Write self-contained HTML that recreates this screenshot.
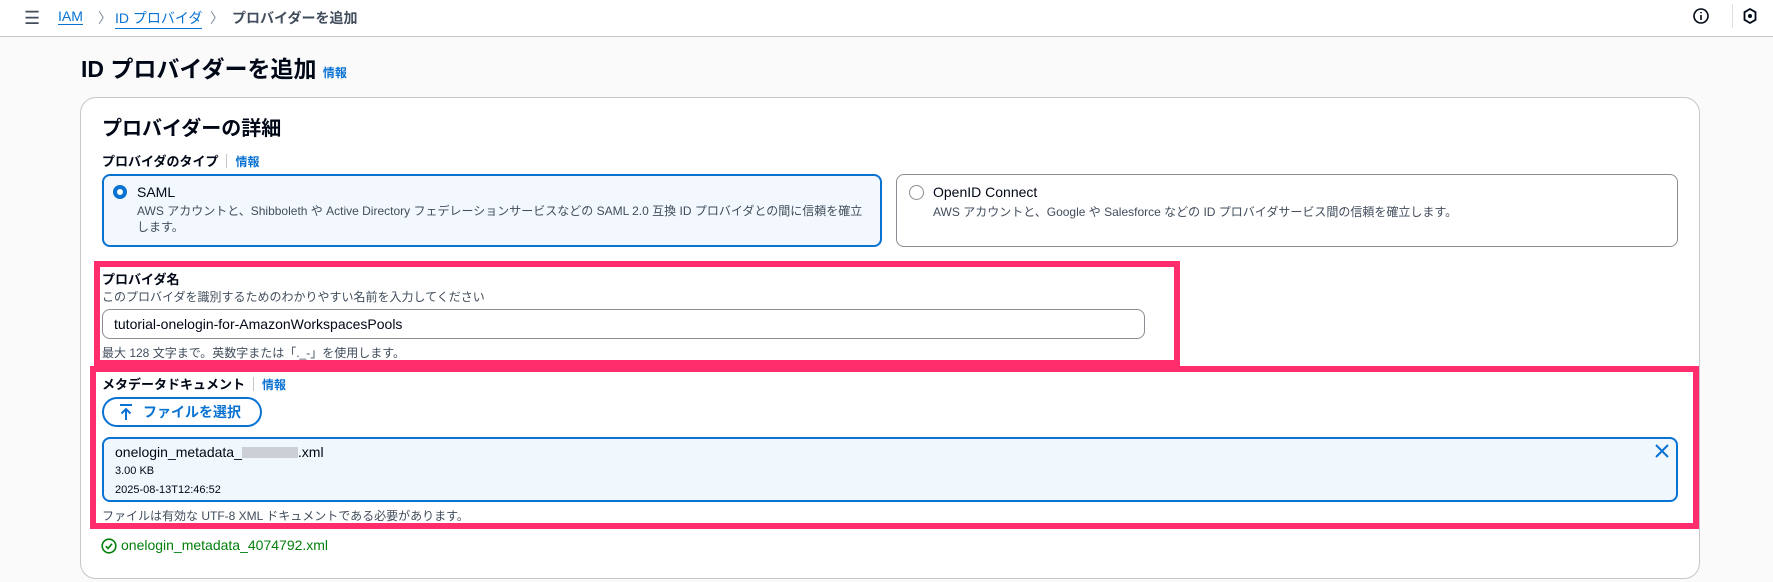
<!DOCTYPE html>
<html><head><meta charset="utf-8"><style>
*{box-sizing:border-box;margin:0;padding:0}
body{width:1773px;height:582px;background:#fafafa;font-family:"Liberation Sans","Noto Sans CJK JP",sans-serif;color:#000716;position:relative;overflow:hidden}
.abs{position:absolute;white-space:nowrap}
.hdr{position:absolute;left:0;top:0;width:1773px;height:37px;background:#fff;border-bottom:1px solid #c6c6cd}
a{color:#0972d3;text-decoration:none}
.bc{font-size:14px;top:8px}
.card{position:absolute;left:80px;top:97px;width:1620px;height:482px;background:#fff;border:1px solid #c6c6cd;border-radius:16px}
.tile{position:absolute;top:174px;height:73px;border-radius:8px}
.pink{position:absolute;border:6px solid #ff2d6b}
.small{font-size:12px;color:#414d5c}
.lbl{font-size:14px;font-weight:bold}
.info{font-size:12px;color:#0972d3;font-weight:bold}
.sep{display:inline-block;width:1px;height:14px;background:#c6c6cd;margin:0 8px;vertical-align:-2px}
</style></head><body>
<div class="hdr"></div>
<div class="abs" style="left:24px;top:8px;font-size:18px;color:#414d5c">☰</div>
<a class="abs bc" style="left:58px;border-bottom:1px solid #0972d3">IAM</a>
<div class="abs bc" style="left:98px;color:#7d8998">〉</div>
<a class="abs bc" style="left:115px;border-bottom:1px solid #0972d3">ID プロバイダ</a>
<div class="abs bc" style="left:210px;color:#7d8998">〉</div>
<div class="abs bc" style="left:232px;color:#414d5c;font-weight:bold">プロバイダーを追加</div>
<svg class="abs" style="left:1692px;top:7px" width="18" height="18" viewBox="0 0 18 18"><circle cx="9" cy="9" r="7" fill="none" stroke="#000716" stroke-width="1.6"/><path d="M9 8v5M9 5v1.2" stroke="#000716" stroke-width="1.6"/></svg>
<div class="abs" style="left:1732px;top:4px;width:1px;height:24px;background:#e0e0e0"></div>
<svg class="abs" style="left:1742px;top:7px" width="16" height="18" viewBox="0 0 16 18"><path d="M8 2l5.5 3.2v7.6L8 16 2.5 12.8V5.2z" fill="none" stroke="#000716" stroke-width="1.8"/><circle cx="8" cy="9" r="2" fill="#000716"/></svg>
<div class="abs" style="left:81px;top:50px;font-size:23px;font-weight:bold">ID プロバイダーを追加 <span style="font-size:12px;color:#0972d3">情報</span></div>
<div class="card"></div>
<div class="abs" style="left:102px;top:112px;font-size:20px;font-weight:bold">プロバイダーの詳細</div>
<div class="abs lbl" style="left:102px;top:151px;font-size:13px">プロバイダのタイプ<span class="sep"></span><span class="info">情報</span></div>
<div class="tile" style="left:102px;width:780px;background:#f2f8fd;border:2px solid #0972d3"></div>
<div class="abs" style="left:113px;top:185px;width:14px;height:14px;border-radius:50%;border:4px solid #0972d3;background:#fff"></div>
<div class="abs" style="left:137px;top:184px;font-size:14px">SAML</div>
<div class="abs small" style="left:137px;top:203px;line-height:16px">AWS アカウントと、Shibboleth や Active Directory フェデレーションサービスなどの SAML 2.0 互換 ID プロバイダとの間に信頼を確立<br>します。</div>
<div class="tile" style="left:896px;width:782px;background:#fff;border:1px solid #8c8c94"></div>
<div class="abs" style="left:909px;top:185px;width:15px;height:15px;border-radius:50%;border:1px solid #8c8c94"></div>
<div class="abs" style="left:933px;top:184px;font-size:14px">OpenID Connect</div>
<div class="abs small" style="left:933px;top:203px">AWS アカウントと、Google や Salesforce などの ID プロバイダサービス間の信頼を確立します。</div>
<div class="pink" style="left:94px;top:261px;width:1086px;height:105px"></div>
<div class="abs lbl" style="left:102px;top:269px;font-size:13px">プロバイダ名</div>
<div class="abs small" style="left:102px;top:288px">このプロバイダを識別するためのわかりやすい名前を入力してください</div>
<div class="abs" style="left:102px;top:309px;width:1043px;height:30px;border:1px solid #8c8c94;border-radius:8px;background:#fff"></div>
<div class="abs" style="left:114px;top:316px;font-size:14px">tutorial-onelogin-for-AmazonWorkspacesPools</div>
<div class="abs small" style="left:102px;top:344px">最大 128 文字まで。英数字または「._-」を使用します。</div>
<div class="pink" style="left:90px;top:366px;width:1609px;height:163px"></div>
<div class="abs lbl" style="left:102px;top:374px;font-size:13px">メタデータドキュメント<span class="sep"></span><span class="info">情報</span></div>
<div class="abs" style="left:102px;top:397px;width:160px;height:30px;border:2px solid #0972d3;border-radius:16px;background:#fff"></div>
<svg class="abs" style="left:118px;top:403px" width="16" height="18" viewBox="0 0 16 18"><path d="M2 2h12M8 17V6M3.5 10.5L8 6l4.5 4.5" fill="none" stroke="#0972d3" stroke-width="2"/></svg>
<div class="abs" style="left:143px;top:402px;font-size:14px;font-weight:bold;color:#0972d3">ファイルを選択</div>
<div class="abs" style="left:102px;top:437px;width:1576px;height:65px;border:2px solid #0972d3;border-radius:8px;background:#f0f8fd"></div>
<div class="abs" style="left:115px;top:444px;font-size:14px">onelogin_metadata_<span style="display:inline-block;width:56px;height:11px;background:#ccd0d6;vertical-align:-1px"></span>.xml</div>
<div class="abs" style="left:115px;top:465px;font-size:11px">3.00 KB</div>
<div class="abs" style="left:115px;top:484px;font-size:11px">2025-08-13T12:46:52</div>
<svg class="abs" style="left:1655px;top:444px" width="14" height="14" viewBox="0 0 14 14"><path d="M1 1l12 12M13 1L1 13" stroke="#0972d3" stroke-width="2"/></svg>
<div class="abs small" style="left:102px;top:507px">ファイルは有効な UTF-8 XML ドキュメントである必要があります。</div>
<svg class="abs" style="left:101px;top:538px" width="16" height="16" viewBox="0 0 16 16"><circle cx="8" cy="8" r="6.8" fill="none" stroke="#037f0c" stroke-width="1.6"/><path d="M4.8 8.2l2.2 2.2 4-4.6" fill="none" stroke="#037f0c" stroke-width="1.6"/></svg>
<div class="abs" style="left:121px;top:537px;font-size:14px;color:#037f0c">onelogin_metadata_4074792.xml</div>
</body></html>
